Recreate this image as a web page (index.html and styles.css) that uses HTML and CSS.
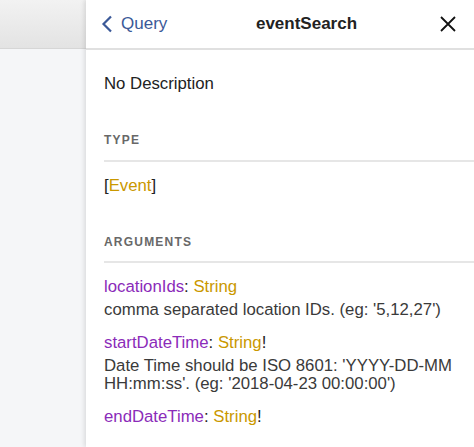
FILE: index.html
```html
<!DOCTYPE html>
<html>
<head>
<meta charset="utf-8">
<link rel="stylesheet" href="styles.css">
</head>
<body>
<div class="app">
  <div class="sidebar">
    <div class="sidebar-head"></div>
  </div>
  <div class="panel">
    <div class="titlebar">
      <div class="back">
        <svg class="chev" width="12" height="18" viewBox="0 0 12 18"><path d="M10 1.5 L2.5 9 L10 16.5" fill="none" stroke="#3b5998" stroke-width="2.2"/></svg>
        <span>Query</span>
      </div>
      <div class="title">eventSearch</div>
      <div class="close">
        <svg width="16" height="16" viewBox="0 0 16 16"><path d="M1 1 L15 15 M15 1 L1 15" fill="none" stroke="#111" stroke-width="1.8"/></svg>
      </div>
    </div>
    <div class="content">
      <div class="desc">No Description</div>
      <div class="cat">Type</div>
      <div class="typeline">[<span class="tn">Event</span>]</div>
      <div class="cat cat-args">Arguments</div>
      <div class="arg">
        <div class="aname"><span class="an">locationIds</span>: <span class="tn">String</span></div>
        <div class="ad">comma separated location IDs. (eg: '5,12,27')</div>
      </div>
      <div class="arg">
        <div class="aname"><span class="an">startDateTime</span>: <span class="tn">String</span>!</div>
        <div class="ad">Date Time should be ISO 8601: 'YYYY-DD-MM HH:mm:ss'. (eg: '2018-04-23 00:00:00')</div>
      </div>
      <div class="arg">
        <div class="aname"><span class="an">endDateTime</span>: <span class="tn">String</span>!</div>
      </div>
    </div>
  </div>
</div>
</body>
</html>
```
FILE: styles.css
```css
html, body {
  margin: 0;
  padding: 0;
  height: 100%;
  overflow: hidden;
  background: #fff;
}
body {
  font-family: "Liberation Sans", Arial, sans-serif;
  color: #222;
}
.app {
  display: flex;
  height: 447px;
}
.sidebar {
  width: 86px;
  flex: none;
  background: #f5f6f8;
}
.sidebar-head {
  height: 48px;
  background: linear-gradient(#f2f2f2, #e3e3e3);
  border-bottom: 1px solid #d6d6d6;
}
.panel {
  flex: 1;
  background: #fff;
  box-shadow: -2px 0 4px rgba(0,0,0,0.10);
  position: relative;
  z-index: 1;
}
.titlebar {
  height: 48px;
  border-bottom: 2px solid #e0e0e0;
  display: flex;
  align-items: center;
}
.back {
  width: 101px;
  display: flex;
  align-items: center;
  color: #3b5998;
  font-size: 17px;
  padding-left: 15px;
  box-sizing: border-box;
  white-space: nowrap;
}
.chev {
  margin-right: 8px;
}
.title {
  flex: 1;
  text-align: center;
  font-weight: bold;
  font-size: 17px;
}
.close {
  width: 44px;
  display: flex;
  justify-content: center;
  padding-right: 4px;
}
.content {
  padding: 24px 0 0 18px;
  font-size: 16.75px;
}
.desc {
  line-height: 20px;
}
.cat {
  margin-top: 39px;
  font-size: 12px;
  font-weight: bold;
  text-transform: uppercase;
  letter-spacing: 1.2px;
  color: #686868;
  padding-bottom: 13px;
  border-bottom: 2px solid #e6e6e6;
  line-height: 14px;
}
.typeline {
  margin-top: 14px;
  line-height: 20px;
}
.cat-args {
  margin-top: 39px;
  padding-bottom: 12px;
}
.tn { color: #ca9800; }
.an { color: #8b2bb9; }
.arg {
  margin-top: 14px;
}
.aname {
  line-height: 20px;
  margin-bottom: 4px;
}
.ad {
  color: #3a3a3a;
  line-height: 18px;
  padding-right: 20px;
}
```
